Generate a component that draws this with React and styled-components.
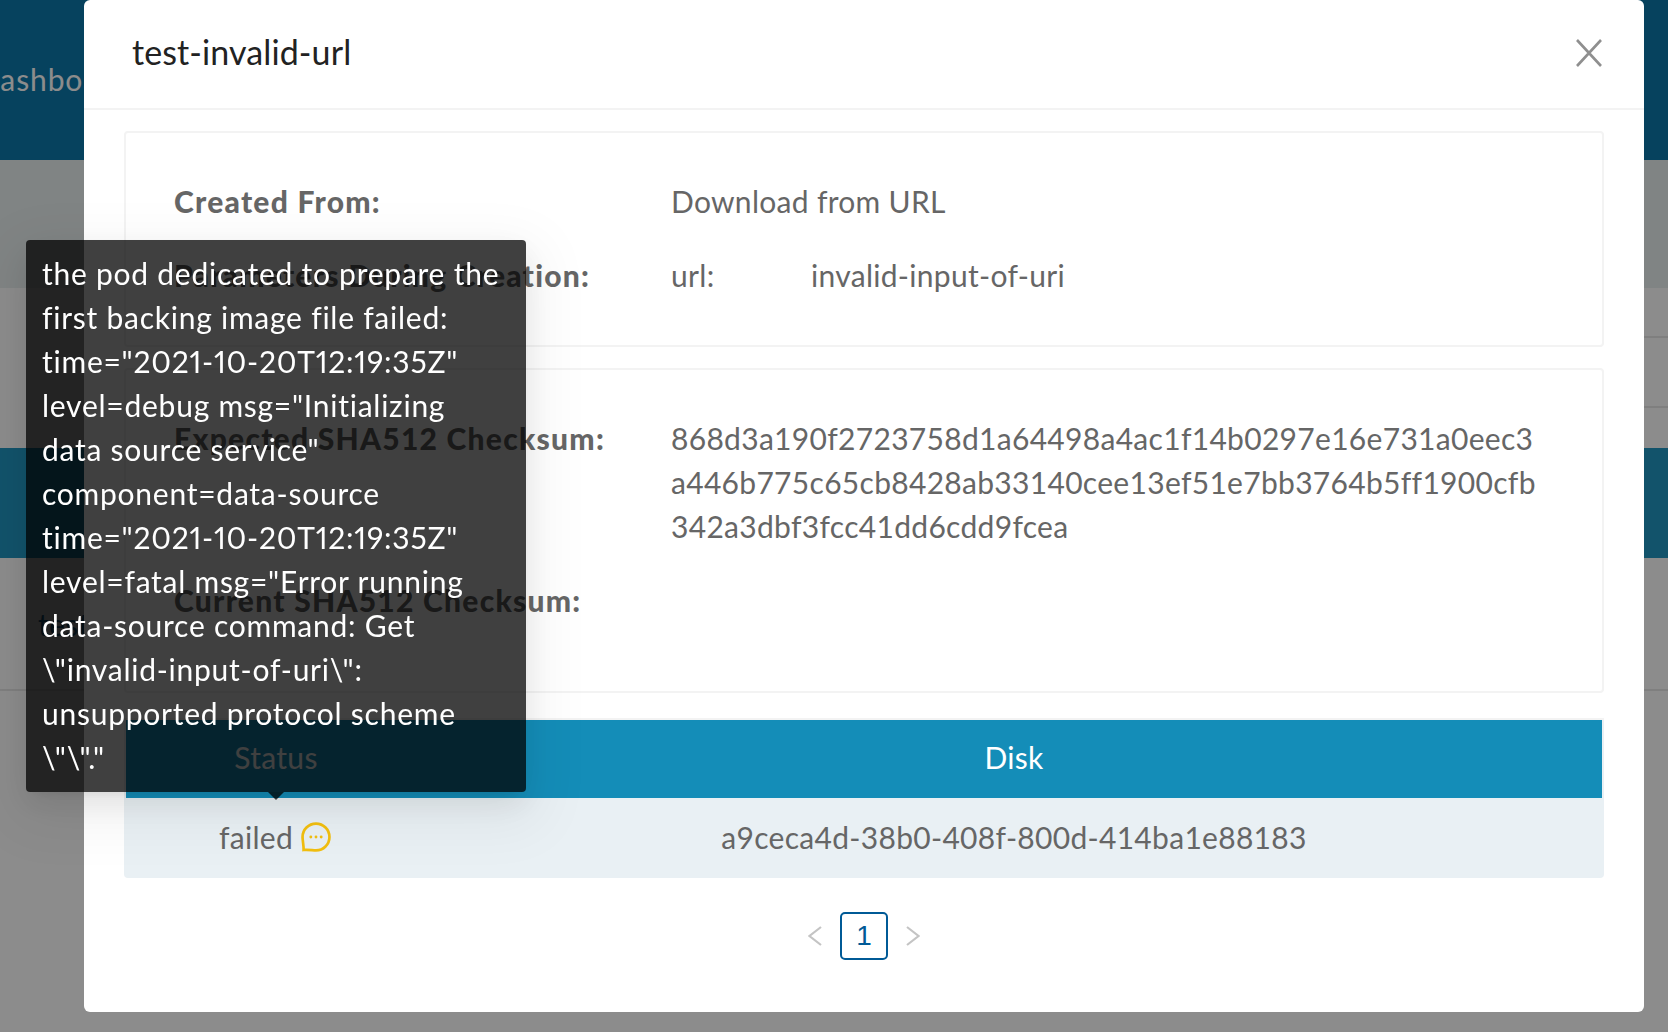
import styled, { createGlobalStyle } from 'styled-components';

const GlobalStyle = createGlobalStyle`
  html, body {
    margin: 0;
    height: 100%;
    overflow: hidden;
    font-family: Lato, "Open Sans", sans-serif;
    font-size: 30px;
    line-height: 44px;
    letter-spacing: 0.3px;
    color: #666;
  }
  * {
    box-sizing: border-box;
  }
`;

const tooltipLines = [
    'the pod dedicated to prepare the',
    'first backing image file failed:',
    'time="2021-10-20T12:19:35Z"',
    'level=debug msg="Initializing',
    'data source service"',
    'component=data-source',
    'time="2021-10-20T12:19:35Z"',
    'level=fatal msg="Error running',
    'data-source command: Get',
    '\\"invalid-input-of-uri\\":',
    'unsupported protocol scheme',
    '\\"\\"."',
];

const hashLines = [
    '868d3a190f2723758d1a64498a4ac1f14b0297e16e731a0eec3',
    'a446b775c65cb8428ab33140cee13ef51e7bb3764b5ff1900cfb',
    '342a3dbf3fcc41dd6cdd9fcea',
];

const App = () => {
    return (
        <>
            <GlobalStyle />
            <Page>
                <TopBar>
                    <NavItem>Dashboard</NavItem>
                </TopBar>
                <Breadcrumb />
                <Toolbar>
                    <SearchInput />
                </Toolbar>
                <ListHeader />
                <ListRow>
                    <RowLink>test-invalid-url</RowLink>
                </ListRow>
            </Page>
            <Overlay />
            <ModalWrap>
                <Modal>
                    <ModalHeader>
                        <ModalTitle>test-invalid-url</ModalTitle>
                        <CloseButton aria-label="Close">
                            <svg width="26" height="28" viewBox="0 0 26 28" fill="none" stroke="#8f8f8f" strokeWidth="2.6">
                                <path d="M1 1 25 27M25 1 1 27" />
                            </svg>
                        </CloseButton>
                    </ModalHeader>
                    <ModalBody>
                        <InfoCard>
                            <InfoRow>
                                <InfoLabel>Created From:</InfoLabel>
                                <InfoValue>Download from URL</InfoValue>
                            </InfoRow>
                            <InfoRow>
                                <InfoLabel>Parameters During Creation:</InfoLabel>
                                <ParamValue>
                                    <ParamKey>url:</ParamKey>
                                    <span>invalid-input-of-uri</span>
                                </ParamValue>
                            </InfoRow>
                        </InfoCard>
                        <InfoCard>
                            <InfoRow>
                                <InfoLabel>Expected SHA512 Checksum:</InfoLabel>
                                <InfoValue>
                                    {hashLines.map((line) => (
                                        <HashLine key={line}>{line}</HashLine>
                                    ))}
                                </InfoValue>
                            </InfoRow>
                            <InfoRow $empty>
                                <InfoLabel>Current SHA512 Checksum:</InfoLabel>
                                <InfoValue />
                            </InfoRow>
                        </InfoCard>
                        <TableWrap>
                            <TableHead>
                                <HeadCell>Status</HeadCell>
                                <HeadCell>Disk</HeadCell>
                            </TableHead>
                            <TableRow>
                                <StatusCell>
                                    failed
                                    <svg width="30" height="30" viewBox="0.5 0.5 29 29" fill="none">
                                        <path
                                            d="M2 15A13 13 0 1 1 15 28C11.5 28 8.5 27 3 27.5 3.2 23 2 19 2 15Z"
                                            stroke="#f2bf10"
                                            strokeWidth="2.6"
                                        />
                                        <circle cx="10" cy="15" r="1.4" fill="#f2bf10" />
                                        <circle cx="15" cy="15" r="1.4" fill="#f2bf10" />
                                        <circle cx="20" cy="15" r="1.4" fill="#f2bf10" />
                                    </svg>
                                </StatusCell>
                                <DiskCell>a9ceca4d-38b0-408f-800d-414ba1e88183</DiskCell>
                            </TableRow>
                        </TableWrap>
                        <Pager>
                            <svg width="14" height="20" viewBox="0 0 14 20" fill="none" stroke="#c4c4c4" strokeWidth="2.2">
                                <path d="M13 1 1.5 10 13 19" />
                            </svg>
                            <PageButton>1</PageButton>
                            <svg width="14" height="20" viewBox="0 0 14 20" fill="none" stroke="#c4c4c4" strokeWidth="2.2">
                                <path d="M1 1 12.5 10 1 19" />
                            </svg>
                        </Pager>
                    </ModalBody>
                </Modal>
            </ModalWrap>
            <Tooltip>
                {tooltipLines.map((line, i) => (
                    <TooltipLine key={i}>{line}</TooltipLine>
                ))}
                <TooltipArrow />
            </Tooltip>
        </>
    );
};

export default App;

const Page = styled.div`
  width: 1668px;
  height: 1032px;
  overflow: hidden;
  background: #fff;
`;

const TopBar = styled.header`
  height: 160px;
  display: flex;
  align-items: center;
  padding-bottom: 2px;
  background: #0c78ab;
`;

const NavItem = styled.span`
  margin-left: -23px;
  font-size: 30px;
  letter-spacing: 0.9px;
  color: #fff;
`;

const Breadcrumb = styled.div`
  height: 128px;
  background: #e9f0f0;
`;

const Toolbar = styled.div`
  height: 160px;
  display: flex;
  justify-content: flex-end;
  padding-top: 48px;
`;

const SearchInput = styled.div`
  width: 120px;
  height: 72px;
  margin-right: -10px;
  border: 2px solid #e8e8e8;
`;

const ListHeader = styled.div`
  height: 110px;
  background: #2197c3;
`;

const ListRow = styled.div`
  height: 133px;
  display: flex;
  align-items: center;
  padding-left: 38px;
  border-bottom: 2px solid #e8e8e8;
`;

const RowLink = styled.a`
  color: #1a6a96;
`;

const Overlay = styled.div`
  position: fixed;
  inset: 0;
  background: rgba(0, 0, 0, 0.45);
`;

const ModalWrap = styled.div`
  position: fixed;
  inset: 0;
  display: flex;
  align-items: flex-start;
  padding-left: 84px;
`;

const Modal = styled.div`
  width: 1560px;
  height: 1012px;
  background: #fff;
  border-radius: 6px;
`;

const ModalHeader = styled.div`
  height: 110px;
  display: flex;
  justify-content: space-between;
  align-items: center;
  padding: 0 42px 4px 48px;
  border-bottom: 2px solid #f3f3f3;
`;

const ModalTitle = styled.div`
  font-size: 34px;
  letter-spacing: 0.1px;
  color: #222;
`;

const CloseButton = styled.button`
  display: flex;
  margin-top: 2px;
  padding: 0;
  border: 0;
  background: none;
`;

const ModalBody = styled.div`
  padding: 21px 40px 0;
`;

const InfoCard = styled.div`
  margin-bottom: 21px;
  padding: 46px 48px 18px;
  border: 2px solid #f3f3f3;
  border-radius: 4px;
`;

const InfoRow = styled.div`
  display: grid;
  grid-template-columns: 497px 1fr;
  min-height: ${(props) => (props.$empty ? '65px' : '44px')};
  margin-bottom: 30px;
`;

const InfoLabel = styled.div`
  font-weight: 900;
  letter-spacing: 1.25px;
  color: #666;
  white-space: nowrap;
`;

const InfoValue = styled.div`
  color: #666;
`;

const ParamValue = styled(InfoValue)`
  display: flex;
`;

const ParamKey = styled.span`
  width: 140px;
`;

const HashLine = styled.div`
  white-space: nowrap;
`;

const TableWrap = styled.div`
  margin-top: 25px;
  border-top: 2px solid #f3f3f3;
  border-radius: 0 0 4px 4px;
  overflow: hidden;
  background: #e9f0f4;
`;

const TableHead = styled.div`
  display: grid;
  grid-template-columns: 300px 1fr;
  height: 78px;
  margin: 0 2px;
  background: #148db8;
`;

const HeadCell = styled.div`
  display: flex;
  justify-content: center;
  align-items: center;
  padding-bottom: 5px;
  color: #fff;
`;

const TableRow = styled.div`
  display: grid;
  grid-template-columns: 302px 1fr;
  height: 80px;
  padding-right: 2px;
`;

const StatusCell = styled.div`
  display: flex;
  justify-content: center;
  align-items: center;
  gap: 8px;
  padding-bottom: 2px;
`;

const DiskCell = styled.div`
  display: flex;
  justify-content: center;
  align-items: center;
  padding-bottom: 2px;
`;

const Pager = styled.div`
  display: flex;
  justify-content: center;
  align-items: center;
  gap: 18px;
  margin-top: 34px;
`;

const PageButton = styled.div`
  width: 48px;
  height: 48px;
  display: flex;
  justify-content: center;
  align-items: center;
  border: 2px solid #005a96;
  border-radius: 5px;
  font-family: "Liberation Sans", Arial, sans-serif;
  font-size: 28px;
  letter-spacing: 0;
  color: #005a96;
`;

const Tooltip = styled.div`
  position: fixed;
  top: 240px;
  left: 26px;
  width: 500px;
  padding: 11px 16px 13px;
  border-radius: 4px;
  background: rgba(0, 0, 0, 0.75);
  color: #fff;
  letter-spacing: 0.75px;
  font-variant-numeric: proportional-nums;
  box-shadow: 0 6px 12px -8px rgba(0, 0, 0, 0.12), 0 12px 32px rgba(0, 0, 0, 0.08), 0 18px 56px 16px rgba(0, 0, 0, 0.05);
`;

const TooltipLine = styled.div`
  white-space: nowrap;
`;

const TooltipArrow = styled.div`
  position: absolute;
  left: 242px;
  bottom: -8px;
  width: 16px;
  height: 8px;
  background: rgba(0, 0, 0, 0.75);
  clip-path: polygon(0 0, 100% 0, 50% 100%);
`;
